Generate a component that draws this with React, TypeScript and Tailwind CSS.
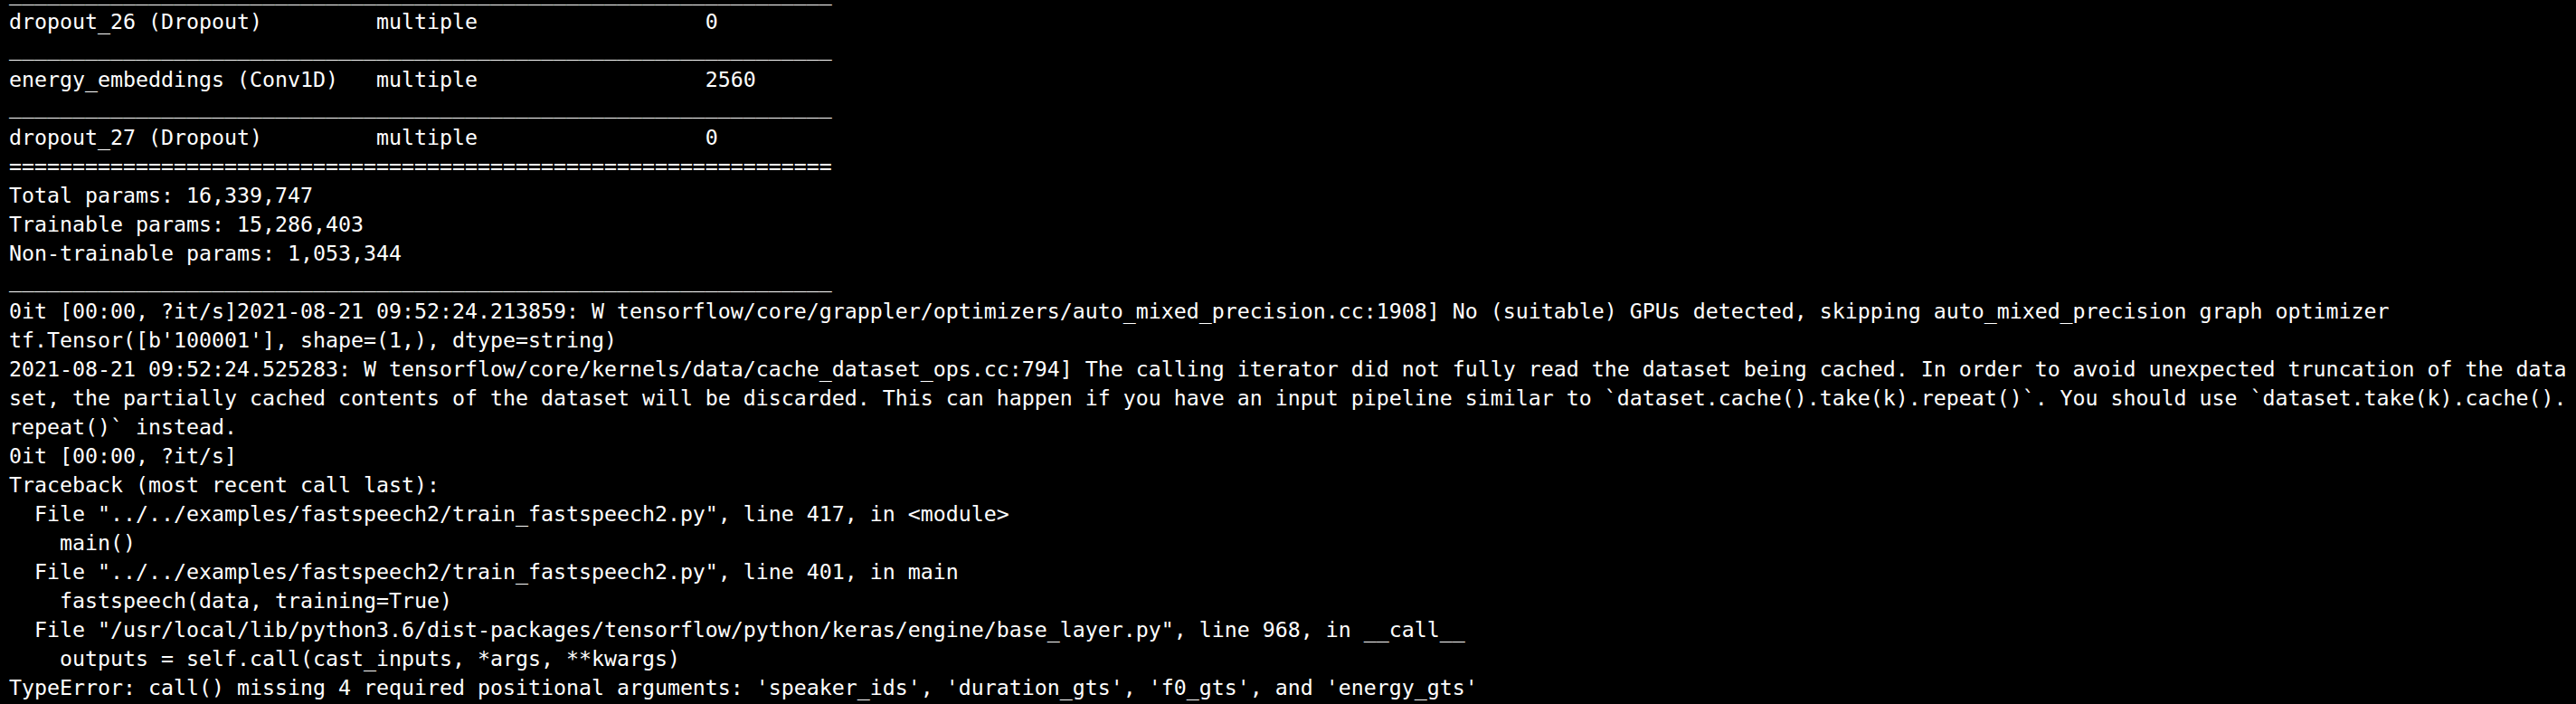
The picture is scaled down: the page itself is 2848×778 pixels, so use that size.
import React from 'react'

const rule = (ch: string) => ch.repeat(65)

const layerRow = (name: string, shape: string, params: string) =>
  name.padEnd(29) + shape.padEnd(26) + params

const lines: string[] = [
  rule('_'),
  layerRow('dropout_26 (Dropout)', 'multiple', '0'),
  rule('_'),
  layerRow('energy_embeddings (Conv1D)', 'multiple', '2560'),
  rule('_'),
  layerRow('dropout_27 (Dropout)', 'multiple', '0'),
  rule('='),
  'Total params: 16,339,747',
  'Trainable params: 15,286,403',
  'Non-trainable params: 1,053,344',
  rule('_'),
  '0it [00:00, ?it/s]2021-08-21 09:52:24.213859: W tensorflow/core/grappler/optimizers/auto_mixed_precision.cc:1908] No (suitable) GPUs detected, skipping auto_mixed_precision graph optimizer',
  "tf.Tensor([b'100001'], shape=(1,), dtype=string)",
  '2021-08-21 09:52:24.525283: W tensorflow/core/kernels/data/cache_dataset_ops.cc:794] The calling iterator did not fully read the dataset being cached. In order to avoid unexpected truncation of the data',
  'set, the partially cached contents of the dataset will be discarded. This can happen if you have an input pipeline similar to `dataset.cache().take(k).repeat()`. You should use `dataset.take(k).cache().',
  'repeat()` instead.',
  '0it [00:00, ?it/s]',
  'Traceback (most recent call last):',
  '  File "../../examples/fastspeech2/train_fastspeech2.py", line 417, in <module>',
  '    main()',
  '  File "../../examples/fastspeech2/train_fastspeech2.py", line 401, in main',
  '    fastspeech(data, training=True)',
  '  File "/usr/local/lib/python3.6/dist-packages/tensorflow/python/keras/engine/base_layer.py", line 968, in __call__',
  '    outputs = self.call(cast_inputs, *args, **kwargs)',
  "TypeError: call() missing 4 required positional arguments: 'speaker_ids', 'duration_gts', 'f0_gts', and 'energy_gts'",
]

const App = () => {
  return (
    <div className="w-[2848px] h-[778px] overflow-hidden bg-black">
      <div className="-mt-[24px] pl-[10px] font-['DejaVu_Sans_Mono',monospace] text-[23.25px] leading-[32px] text-white">
        {lines.map((line, i) => (
          <div
            key={i}
            className={
              i > 0 && line.startsWith('____')
                ? 'whitespace-pre -mt-[3px] mb-[3px]'
                : 'whitespace-pre'
            }
          >
            {line}
          </div>
        ))}
      </div>
    </div>
  )
}

export default App
